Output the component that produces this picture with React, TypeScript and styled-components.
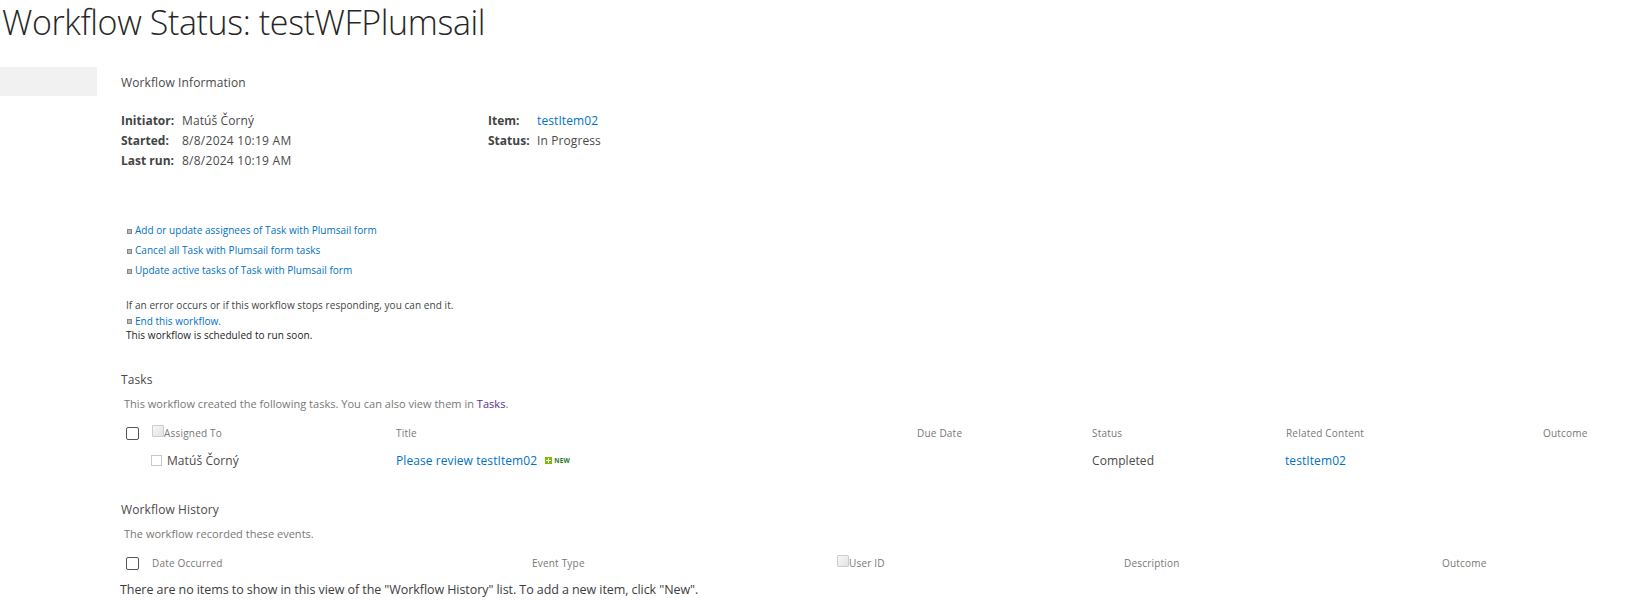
import React from "react";
import styled, { createGlobalStyle } from "styled-components";

const Global = createGlobalStyle`
  html, body { margin: 0; padding: 0; background: #fff; }
  body { font-family: "Open Sans", "Noto Sans", "Liberation Sans", sans-serif; color: #444; overflow: hidden; }
`;

const Page = styled.div`
  width: 1626px;
  height: 611px;
  display: flex;
  flex-direction: column;
`;
const Title = styled.h1`
  margin: 0;
  padding: 0 0 0 2px;
  height: 67px;
  font-family: "Open Sans", sans-serif;
  font-weight: 300;
  font-size: 34px;
  line-height: 44px;
  letter-spacing: -0.38px;
  color: #262626;
  white-space: nowrap;
`;
const Body = styled.div`
  display: flex;
`;
const Side = styled.div`
  width: 97px;
  height: 29px;
  flex: none;
  background: #f1f1f1;
`;
const Main = styled.main`
  flex: 1;
  padding-left: 24px;
  display: flex;
  flex-direction: column;
`;
const Heading = styled.h2<{ $top?: number }>`
  margin: ${(p) => p.$top ?? 0}px 0 0;
  font-size: 12px;
  font-weight: 400;
  line-height: 20px;
  height: 20px;
  color: #4a4a4a;
  letter-spacing: 0.1px;
`;
const Info = styled.div`
  margin-top: 18px;
  display: grid;
  grid-template-columns: 367px 1fr;
`;
const InfoCol = styled.div<{ $label: number }>`
  display: grid;
  grid-template-columns: ${(p) => p.$label}px 1fr;
  grid-auto-rows: 20px;
  font-size: 12px;
  line-height: 20px;
  align-items: center;
  letter-spacing: 0.1px;
`;
const Label = styled.span`
  font-weight: 700;
  color: #444;
  letter-spacing: 0;
`;
const Value = styled.span<{ $date?: boolean }>`
  color: #4a4a4a;
  letter-spacing: ${(p) => (p.$date ? "0.25px" : "0.1px")};
`;
const Link = styled.a<{ $visited?: boolean }>`
  color: ${(p) => (p.$visited ? "#5c2d91" : "#0072c6")};
  text-decoration: none;
`;
const Actions = styled.div`
  margin-top: 49px;
  padding-left: 6px;
  display: flex;
  flex-direction: column;
`;
const ActionRow = styled.div<{ $h: number }>`
  display: flex;
  align-items: center;
  height: ${(p) => p.$h}px;
  font-size: 10px;
  letter-spacing: 0.03px;
  white-space: nowrap;
`;
const Bullet = styled.span`
  width: 3px;
  height: 3px;
  border: 1px solid #888;
  background: #bbb;
  margin-right: 3px;
  flex: none;
  position: relative;
  top: 1px;
`;
const Note = styled.div<{ $dark?: boolean; $top?: number }>`
  height: 15px;
  line-height: 15px;
  margin-top: ${(p) => p.$top ?? 0}px;
  margin-left: -1px;
  font-size: 10px;
  letter-spacing: 0.065px;
  color: ${(p) => (p.$dark ? "#222" : "#444")};
  white-space: nowrap;
`;
const Desc = styled.p<{ $top: number }>`
  margin: ${(p) => p.$top}px 0 0;
  padding-left: 3px;
  font-size: 11px;
  line-height: 16px;
  height: 16px;
  color: #777;
  letter-spacing: 0.02px;
`;
const Row = styled.div<{ $cols: string; $h: number; $top?: number }>`
  display: grid;
  grid-template-columns: ${(p) => p.$cols};
  height: ${(p) => p.$h}px;
  margin-top: ${(p) => p.$top ?? 0}px;
  align-items: center;
`;
const Cell = styled.div`
  display: flex;
  align-items: center;
  font-size: 10px;
  letter-spacing: 0.2px;
  color: #777;
  white-space: nowrap;
`;
const DataCell = styled(Cell)<{ $shift?: number }>`
  font-size: 12px;
  letter-spacing: 0.08px;
  color: #4a4a4a;
  margin-left: ${(p) => p.$shift ?? 0}px;
`;
const CircleBox = styled.span`
  width: 11px;
  height: 11px;
  border: 1px solid #555;
  border-radius: 2px;
  margin-left: 5px;
`;
const MiniBox = styled.span`
  width: 10px;
  height: 10px;
  border: 1px solid #ccc;
  background: linear-gradient(135deg, #f8f8f8, #e2e2e2);
  border-radius: 1px;
  position: relative;
  top: -2px;
`;
const RowBox = styled.span`
  width: 9px;
  height: 9px;
  margin-left: -1px;
  border: 1px solid #c8c8c8;
  background: #fff;
  margin-right: 5px;
`;
const NewBadge = styled.span`
  display: inline-flex;
  align-items: center;
  margin-left: 8px;
  gap: 2px;
  font-size: 6.5px;
  font-weight: 700;
  letter-spacing: 0.2px;
  color: #2a7d2a;
`;
const Message = styled.div`
  margin-top: 3px;
  margin-left: -1px;
  font-size: 12.5px;
  line-height: 20px;
  letter-spacing: -0.07px;
  color: #3c3c3c;
  white-space: nowrap;
`;

const taskCols = "31px 244px 521px 175px 194px 257px 1fr";
const histCols = "31px 380px 305px 287px 318px 1fr";

export default function App() {
  return (
    <Page>
      <Global />
      <Title>Workflow Status: testWFPlumsail</Title>
      <Body>
        <Side />
        <Main>
          <Heading $top={6}>Workflow Information</Heading>
          <Info>
            <InfoCol $label={61}>
              <Label>Initiator:</Label><Value>Matúš Čorný</Value>
              <Label>Started:</Label><Value $date>8/8/2024 10:19 AM</Value>
              <Label>Last run:</Label><Value $date>8/8/2024 10:19 AM</Value>
            </InfoCol>
            <InfoCol $label={49}>
              <Label>Item:</Label><Link href="#">testItem02</Link>
              <Label>Status:</Label><Value>In Progress</Value>
            </InfoCol>
          </Info>
          <Actions>
            <ActionRow $h={20}><Bullet /><Link href="#">Add or update assignees of Task with Plumsail form</Link></ActionRow>
            <ActionRow $h={20}><Bullet /><Link href="#">Cancel all Task with Plumsail form tasks</Link></ActionRow>
            <ActionRow $h={20}><Bullet /><Link href="#">Update active tasks of Task with Plumsail form</Link></ActionRow>
            <Note $top={18}>If an error occurs or if this workflow stops responding, you can end it.</Note>
            <ActionRow $h={15}><Bullet /><Link href="#">End this workflow.</Link></ActionRow>
            <Note $dark>This workflow is scheduled to run soon.</Note>
          </Actions>
          <Heading $top={27}>Tasks</Heading>
          <Desc $top={6}>This workflow created the following tasks. You can also view them in <Link href="#" $visited>Tasks</Link>.</Desc>
          <Row $cols={taskCols} $h={28} $top={7}>
            <Cell><CircleBox /></Cell>
            <Cell><MiniBox />Assigned To</Cell>
            <Cell>Title</Cell>
            <Cell>Due Date</Cell>
            <Cell>Status</Cell>
            <Cell>Related Content</Cell>
            <Cell>Outcome</Cell>
          </Row>
          <Row $cols={taskCols} $h={27}>
            <Cell />
            <DataCell><RowBox />Matúš Čorný</DataCell>
            <DataCell>
              <Link href="#">Please review testItem02</Link>
              <NewBadge>
                <svg width="7" height="7" viewBox="0 0 7 7"><rect width="7" height="7" fill="#7fba00" /><path d="M3.5 1v5M1 3.5h5" stroke="#fff" strokeWidth="1" /></svg>
                NEW
              </NewBadge>
            </DataCell>
            <Cell />
            <DataCell>Completed</DataCell>
            <DataCell $shift={-1}><Link href="#">testItem02</Link></DataCell>
            <Cell />
          </Row>
          <Heading $top={26}>Workflow History</Heading>
          <Desc $top={6}>The workflow recorded these events.</Desc>
          <Row $cols={histCols} $h={28} $top={7}>
            <Cell><CircleBox /></Cell>
            <Cell>Date Occurred</Cell>
            <Cell>Event Type</Cell>
            <Cell><MiniBox />User ID</Cell>
            <Cell>Description</Cell>
            <Cell>Outcome</Cell>
          </Row>
          <Message>There are no items to show in this view of the "Workflow History" list. To add a new item, click "New".</Message>
        </Main>
      </Body>
    </Page>
  );
}
